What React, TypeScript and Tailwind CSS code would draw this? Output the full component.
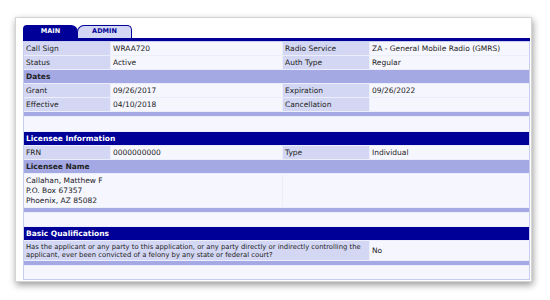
import clsx from "clsx";

const label = "bg-[#d3d7f3] px-[2px] flex items-center";
const value = "bg-[#f6f6ff] px-[2px] flex items-center";
const band = "bg-[#a4a9e3]";

function Row({ k1, v1, k2, v2 }: { k1: string; v1: string; k2: string; v2: string }) {
  return (
    <>
      <div className={clsx(label, "h-[13px]")}>{k1}</div>
      <div className={value}>{v1}</div>
      <div className={label}>{k2}</div>
      <div className={value}>{v2}</div>
    </>
  );
}

function SubHead({ text }: { text: string }) {
  return (
    <div className={clsx(band, "col-span-4 h-[13px] px-[2px] flex items-center font-bold")}>
      {text}
    </div>
  );
}

function Head({ text }: { text: string }) {
  return (
    <div className="col-span-4 h-[13px] bg-[#000099] px-[2px] flex items-center font-bold text-white">
      {text}
    </div>
  );
}

export default function App() {
  return (
    <div className="w-[550px] h-[300px] bg-white pt-[17px] pl-[15px] font-['DejaVu_Sans',sans-serif] text-[7.5px] text-[#222]">
      <div className="w-[517px] h-[265px] bg-white border border-[#d4d4d4] shadow-[1px_3px_7px_rgba(0,0,0,0.4)] pl-[7px] pt-[6px]">
        <div className="flex items-end h-[14px]">
          <div className="w-[55px] h-[13px] rounded-tl-[4px] rounded-tr-[7px] bg-[#000099] text-white font-bold text-[6.5px] flex items-center justify-center">
            MAIN
          </div>
          <div className="w-[55px] h-[13px] -ml-px rounded-tl-[7px] rounded-tr-[5px] border border-b-0 border-[#000099] bg-[#d3d7f3] text-[#000099] font-bold text-[6.5px] flex items-center justify-center">
            ADMIN
          </div>
        </div>
        <div className="w-[507px] h-[3px] bg-[#000099]" />
        <div className="w-[507px] grid grid-cols-[86px_171px_86px_1fr] gap-px bg-[#eceefb] border border-[#c8ccef]">
          <Row k1="Call Sign" v1="WRAA720" k2="Radio Service" v2="ZA - General Mobile Radio (GMRS)" />
          <Row k1="Status" v1="Active" k2="Auth Type" v2="Regular" />
          <SubHead text="Dates" />
          <Row k1="Grant" v1="09/26/2017" k2="Expiration" v2="09/26/2022" />
          <Row k1="Effective" v1="04/10/2018" k2="Cancellation" v2="" />
          <div className={clsx(band, "col-span-4 h-[4px]")} />
          <div className={clsx(value, "col-span-4 h-[14px]")} />

          <Head text="Licensee Information" />
          <div className={clsx(label, "h-[13px]")}>FRN</div>
          <div className={value}>0000000000</div>
          <div className={label}>Type</div>
          <div className={value}>Individual</div>
          <SubHead text="Licensee Name" />
          <div className={clsx(value, "col-span-2 h-[33px] flex-col items-start justify-center leading-[10px]")}>
            <span>Callahan, Matthew F</span>
            <span>P.O. Box 67357</span>
            <span>Phoenix, AZ 85082</span>
          </div>
          <div className={clsx(value, "col-span-2")} />
          <div className={clsx(band, "col-span-4 h-[4px]")} />
          <div className={clsx(value, "col-span-4 h-[13px]")} />

          <Head text="Basic Qualifications" />
          <div className={clsx(label, "col-span-3 h-[19px] leading-[8px] text-[6.8px] whitespace-nowrap")}>
            <span>
              Has the applicant or any party to this application, or any party directly or indirectly controlling the
              <br />
              applicant, ever been convicted of a felony by any state or federal court?
            </span>
          </div>
          <div className={value}>No</div>
          <div className={clsx(band, "col-span-4 h-[4px]")} />
          <div className={clsx(value, "col-span-4 h-[13px]")} />
        </div>
      </div>
    </div>
  );
}
